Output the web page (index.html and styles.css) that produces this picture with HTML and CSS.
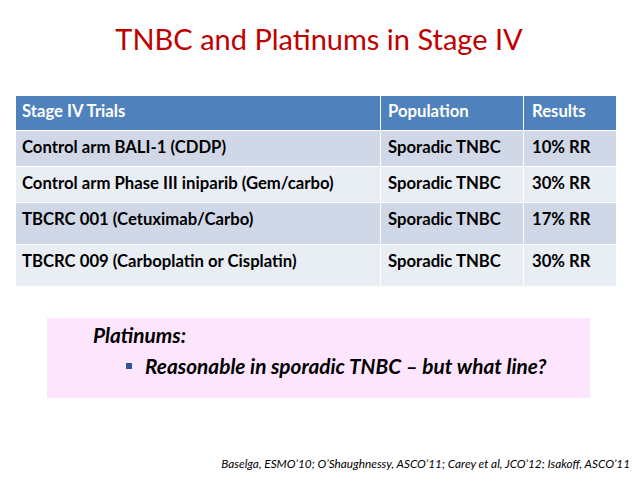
FILE: index.html
```html
<!DOCTYPE html>
<html>
<head>
<meta charset="utf-8">
<link rel="stylesheet" href="styles.css">
</head>
<body>
<div class="slide">
  <h1 class="title">TNBC and Platinums in Stage IV</h1>
  <div class="table">
    <div class="cell head">Stage IV Trials</div>
    <div class="cell head">Population</div>
    <div class="cell head">Results</div>

    <div class="cell odd">Control arm BALI-1 (CDDP)</div>
    <div class="cell odd">Sporadic TNBC</div>
    <div class="cell odd">10% RR</div>

    <div class="cell even">Control arm Phase III iniparib (Gem/carbo)</div>
    <div class="cell even">Sporadic TNBC</div>
    <div class="cell even">30% RR</div>

    <div class="cell odd">TBCRC 001 (Cetuximab/Carbo)</div>
    <div class="cell odd">Sporadic TNBC</div>
    <div class="cell odd">17% RR</div>

    <div class="cell even">TBCRC 009 (Carboplatin or Cisplatin)</div>
    <div class="cell even">Sporadic TNBC</div>
    <div class="cell even">30% RR</div>
  </div>
  <div class="note">
    <p class="note-head">Platinums:</p>
    <p class="note-item"><span class="bullet"></span>Reasonable in sporadic TNBC – but what line?</p>
  </div>
  <p class="refs">Baselga, ESMO’10; O’Shaughnessy, ASCO’11; Carey et al, JCO’12; Isakoff, ASCO’11</p>
</div>
</body>
</html>
```
FILE: styles.css
```css
html, body {
  margin: 0;
  padding: 0;
  background: #ffffff;
}
.slide {
  width: 638px;
  height: 478px;
  display: flex;
  flex-direction: column;
  font-family: Lato, "Open Sans", sans-serif;
  color: #000;
}
.title {
  margin: 19px 0 0 0;
  height: 40px;
  line-height: 40px;
  text-align: center;
  font-weight: 400;
  font-size: 29px;
  color: #c00000;
}
.table {
  margin: 37px 0 0 16px;
  width: 600px;
  display: grid;
  grid-template-columns: 364px 142px 92px;
  grid-template-rows: 34px 35px 35px 41px 41px;
  gap: 1px;
  background: #ffffff;
}
.cell {
  font-weight: 700;
  font-size: 16.7px;
  line-height: 22px;
  padding: 5px 6px 0 6px;
}
.head {
  background: #4f81bd;
  color: #ffffff;
  padding-top: 4px;
}
.cell:nth-child(3n+2) { padding-left: 7px; }
.cell:nth-child(3n) { padding-left: 8px; }
.odd { background: #d0d8e8; }
.even { background: #e9edf4; }
.note {
  margin: 32px 0 0 47px;
  width: 543px;
  height: 80px;
  background: #fde5fd;
  box-sizing: border-box;
  padding: 3px 0 0 46px;
  font-weight: 700;
  font-style: italic;
  font-size: 20.8px;
}
.note-head {
  margin: 0;
  line-height: 28px;
}
.note-item {
  margin: 3px 0 0 33px;
  line-height: 28px;
  display: flex;
  align-items: center;
}
.bullet {
  width: 6px;
  height: 6px;
  background: #2b5797;
  margin-right: 13px;
}
.refs {
  margin: 59px 8px 0 0;
  text-align: right;
  font-style: italic;
  font-size: 11.8px;
  line-height: 14px;
}
```
